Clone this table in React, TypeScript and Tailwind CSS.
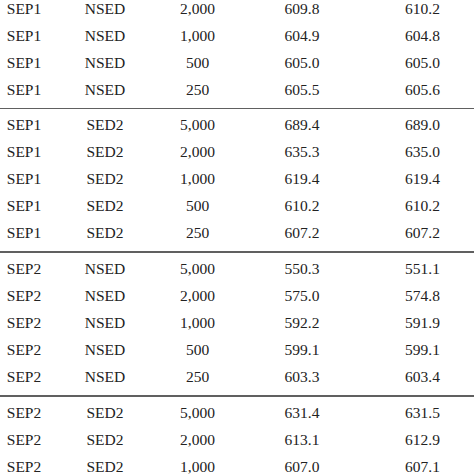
import React from "react";

type Row = [string, string, string, string, string];

const groups: Row[][] = [
  [
    ["SEP1", "NSED", "2,000", "609.8", "610.2"],
    ["SEP1", "NSED", "1,000", "604.9", "604.8"],
    ["SEP1", "NSED", "500", "605.0", "605.0"],
    ["SEP1", "NSED", "250", "605.5", "605.6"],
  ],
  [
    ["SEP1", "SED2", "5,000", "689.4", "689.0"],
    ["SEP1", "SED2", "2,000", "635.3", "635.0"],
    ["SEP1", "SED2", "1,000", "619.4", "619.4"],
    ["SEP1", "SED2", "500", "610.2", "610.2"],
    ["SEP1", "SED2", "250", "607.2", "607.2"],
  ],
  [
    ["SEP2", "NSED", "5,000", "550.3", "551.1"],
    ["SEP2", "NSED", "2,000", "575.0", "574.8"],
    ["SEP2", "NSED", "1,000", "592.2", "591.9"],
    ["SEP2", "NSED", "500", "599.1", "599.1"],
    ["SEP2", "NSED", "250", "603.3", "603.4"],
  ],
  [
    ["SEP2", "SED2", "5,000", "631.4", "631.5"],
    ["SEP2", "SED2", "2,000", "613.1", "612.9"],
    ["SEP2", "SED2", "1,000", "607.0", "607.1"],
  ],
];

function TableRow({ row }: { row: Row }) {
  return (
    <div className="grid grid-cols-[48px_114px_71px_138px_103px] h-[27px] leading-[27px] text-center">
      {row.map((c, i) => (
        <div key={i}>{c}</div>
      ))}
    </div>
  );
}

export default function App() {
  return (
    <div className="w-[474px] h-[474px] overflow-hidden bg-white">
      <div
        className="mt-[-5.4px] text-[15.5px] text-[#222]"
        style={{ fontFamily: '"Liberation Serif", "Times New Roman", serif' }}
      >
        {groups.map((g, gi) => (
          <div key={gi}>
            {gi > 0 && (
              <div className="pt-[5px] pb-[2.3px]">
                <div className="h-[1.5px] bg-[#606060]" />
              </div>
            )}
            {g.map((r, ri) => (
              <TableRow key={ri} row={r} />
            ))}
          </div>
        ))}
      </div>
    </div>
  );
}
